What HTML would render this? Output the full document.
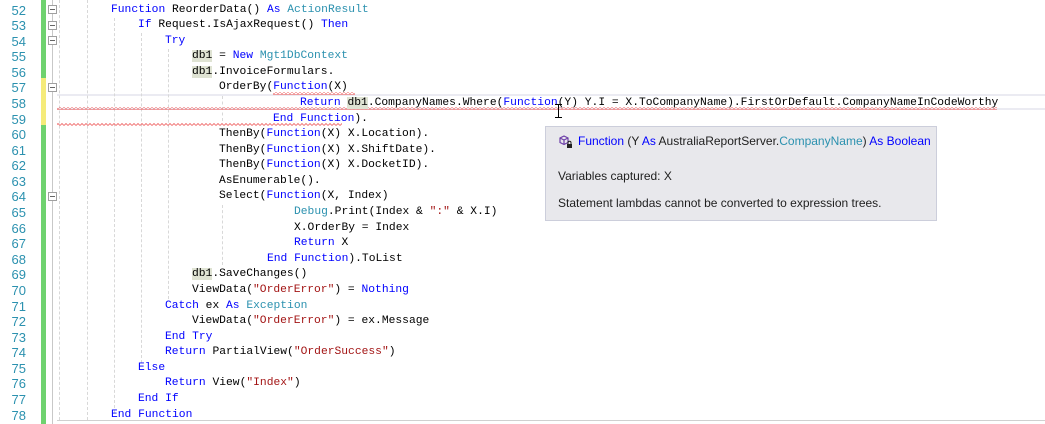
<!DOCTYPE html>
<html><head><meta charset="utf-8">
<style>
html,body{margin:0;padding:0;background:#fff;width:1045px;height:424px;overflow:hidden;position:relative}
.ln{position:absolute;left:0;width:26px;text-align:right;font:13px "Liberation Sans",sans-serif;color:#2b91af;line-height:15.58px}
.c{position:absolute;font-family:"Liberation Mono",monospace;font-size:11.3px;line-height:15.58px;white-space:pre;color:#000}
.k{color:#0000ff}.t{color:#2b91af}.s{color:#a31515}.d{background:#dfe3d3}
.bar{position:absolute;left:41px;width:5px}
.fold{position:absolute;left:48px;width:7px;height:7px;border:1px solid #a0a0a0;background:#fff}
.fold:after{content:"";position:absolute;left:1px;top:3px;width:5px;height:1px;background:#666}
.g{position:absolute;width:0;border-left:1px dashed #d8d8d8}
</style></head><body>
<div class="bar" style="top:0;height:78px;background:#6fd26f"></div>
<div class="bar" style="top:78px;height:47px;background:#f5eb7a"></div>
<div class="bar" style="top:125px;height:299px;background:#6fd26f"></div>
<div style="position:absolute;left:52px;top:0;width:1px;height:424px;background:#c8c8c8"></div>
<div class="fold" style="top:5px"></div><div class="fold" style="top:21px"></div><div class="fold" style="top:36px"></div><div class="fold" style="top:83px"></div><div class="fold" style="top:192px"></div>
<div style="position:absolute;left:57px;top:94px;width:988px;height:12px;border-top:2px solid #ebebf2;border-bottom:2px solid #ebebf2"></div>
<div style="position:absolute;left:57px;top:420px;width:988px;height:1px;background:#d0d0d0"></div>
<div class="g" style="left:59px;top:0;height:420px"></div>
<div class="g" style="left:87px;top:0;height:420px"></div>
<div class="g" style="left:114px;top:18px;height:395px"></div>
<div class="g" style="left:141px;top:33px;height:330px"></div>
<div class="g" style="left:168px;top:49px;height:250px"></div>
<div class="g" style="left:222px;top:96px;height:25px"></div>
<div class="g" style="left:222px;top:205px;height:60px"></div>
<svg style="position:absolute;left:0;top:0" width="1045" height="424">
<defs><pattern id="w" width="4" height="3" patternUnits="userSpaceOnUse"><path d="M0 2.5 L2 0.5 L4 2.5" fill="none" stroke="#f07070" stroke-width="0.9"/></pattern></defs>
<rect x="273" y="92" width="82" height="3" fill="url(#w)"/>
<rect x="57" y="107" width="940" height="3" fill="url(#w)"/>
<rect x="57" y="123" width="285" height="3" fill="url(#w)"/>
</svg>
<div style="position:absolute;left:0;top:2.5px;width:1045px;height:424px">
<div class="ln" style="top:0">52</div><div class="ln" style="top:15.58px">53</div><div class="ln" style="top:31.16px">54</div><div class="ln" style="top:46.74px">55</div><div class="ln" style="top:62.32px">56</div><div class="ln" style="top:77.9px">57</div><div class="ln" style="top:93.48px">58</div><div class="ln" style="top:109.06px">59</div><div class="ln" style="top:124.64px">60</div><div class="ln" style="top:140.22px">61</div><div class="ln" style="top:155.8px">62</div><div class="ln" style="top:171.38px">63</div><div class="ln" style="top:186.96px">64</div><div class="ln" style="top:202.54px">65</div><div class="ln" style="top:218.12px">66</div><div class="ln" style="top:233.7px">67</div><div class="ln" style="top:249.28px">68</div><div class="ln" style="top:264.86px">69</div><div class="ln" style="top:280.44px">70</div><div class="ln" style="top:296.02px">71</div><div class="ln" style="top:311.6px">72</div><div class="ln" style="top:327.18px">73</div><div class="ln" style="top:342.76px">74</div><div class="ln" style="top:358.34px">75</div><div class="ln" style="top:373.92px">76</div><div class="ln" style="top:389.5px">77</div><div class="ln" style="top:405.08px">78</div>
<div class="c" style="left:111px;top:0"><span class="k">Function</span> ReorderData() <span class="k">As</span> <span class="t">ActionResult</span></div>
<div class="c" style="left:138px;top:15.58px"><span class="k">If</span> Request.IsAjaxRequest() <span class="k">Then</span></div>
<div class="c" style="left:165px;top:31.16px"><span class="k">Try</span></div>
<div class="c" style="left:192px;top:46.74px"><span class="d">db1</span> = <span class="k">New</span> <span class="t">Mgt1DbContext</span></div>
<div class="c" style="left:192px;top:62.32px"><span class="d">db1</span>.InvoiceFormulars.</div>
<div class="c" style="left:219px;top:77.9px">OrderBy(<span class="k">Function</span>(X)</div>
<div class="c" style="left:300px;top:93.48px"><span class="k">Return</span> <span class="d">db1</span>.CompanyNames.Where(<span class="k">Function</span>(Y) Y.I = X.ToCompanyName).FirstOrDefault.CompanyNameInCodeWorthy</div>
<div class="c" style="left:273px;top:109.06px"><span class="k">End</span> <span class="k">Function</span>).</div>
<div class="c" style="left:219px;top:124.64px">ThenBy(<span class="k">Function</span>(X) X.Location).</div>
<div class="c" style="left:219px;top:140.22px">ThenBy(<span class="k">Function</span>(X) X.ShiftDate).</div>
<div class="c" style="left:219px;top:155.8px">ThenBy(<span class="k">Function</span>(X) X.DocketID).</div>
<div class="c" style="left:219px;top:171.38px">AsEnumerable().</div>
<div class="c" style="left:219px;top:186.96px">Select(<span class="k">Function</span>(X, Index)</div>
<div class="c" style="left:294px;top:202.54px"><span class="t">Debug</span>.Print(Index &amp; <span class="s">":"</span> &amp; X.I)</div>
<div class="c" style="left:294px;top:218.12px">X.OrderBy = Index</div>
<div class="c" style="left:294px;top:233.7px"><span class="k">Return</span> X</div>
<div class="c" style="left:267px;top:249.28px"><span class="k">End</span> <span class="k">Function</span>).ToList</div>
<div class="c" style="left:192px;top:264.86px"><span class="d">db1</span>.SaveChanges()</div>
<div class="c" style="left:192px;top:280.44px">ViewData(<span class="s">"OrderError"</span>) = <span class="k">Nothing</span></div>
<div class="c" style="left:165px;top:296.02px"><span class="k">Catch</span> ex <span class="k">As</span> <span class="t">Exception</span></div>
<div class="c" style="left:192px;top:311.6px">ViewData(<span class="s">"OrderError"</span>) = ex.Message</div>
<div class="c" style="left:165px;top:327.18px"><span class="k">End</span> <span class="k">Try</span></div>
<div class="c" style="left:165px;top:342.76px"><span class="k">Return</span> PartialView(<span class="s">"OrderSuccess"</span>)</div>
<div class="c" style="left:138px;top:358.34px"><span class="k">Else</span></div>
<div class="c" style="left:165px;top:373.92px"><span class="k">Return</span> View(<span class="s">"Index"</span>)</div>
<div class="c" style="left:138px;top:389.5px"><span class="k">End</span> <span class="k">If</span></div>
<div class="c" style="left:111px;top:405.08px"><span class="k">End</span> <span class="k">Function</span></div>
</div>
<div style="position:absolute;left:558px;top:104px;width:1px;height:14px;background:#000"></div>
<div style="position:absolute;left:555px;top:104px;width:7px;height:1px;background:#000"></div>
<div style="position:absolute;left:555px;top:117px;width:7px;height:1px;background:#000"></div>
<div style="position:absolute;left:545px;top:126px;width:390px;height:93px;background:#e8e8ec;border:1px solid #cccedb;font:12px 'Liberation Sans',sans-serif;color:#1e1e1e">
<svg style="position:absolute;left:13px;top:8px" width="14" height="14" viewBox="0 0 14 14"><path d="M5 1 L9 3 L9 7.5 L5 9.5 L1 7.5 L1 3 Z M1 3 L5 5 L9 3 M5 5 L5 9.5" fill="none" stroke="#6c3ea8" stroke-width="1.2"/><rect x="8" y="9" width="5" height="4" fill="#222"/><path d="M9 9 V7.8 A1.5 1.5 0 0 1 12 7.8 V9" fill="none" stroke="#222" stroke-width="1"/></svg>
<div style="position:absolute;left:32px;top:7px;white-space:nowrap"><span style="color:#0000ff">Function</span> (Y <span style="color:#0000ff">As</span> AustraliaReportServer.<span style="color:#2b91af">CompanyName</span>) <span style="color:#0000ff">As</span> <span style="color:#0000ff">Boolean</span></div>
<div style="position:absolute;left:12px;top:42px">Variables captured: X</div>
<div style="position:absolute;left:12px;top:69px">Statement lambdas cannot be converted to expression trees.</div>
</div>
</body></html>
